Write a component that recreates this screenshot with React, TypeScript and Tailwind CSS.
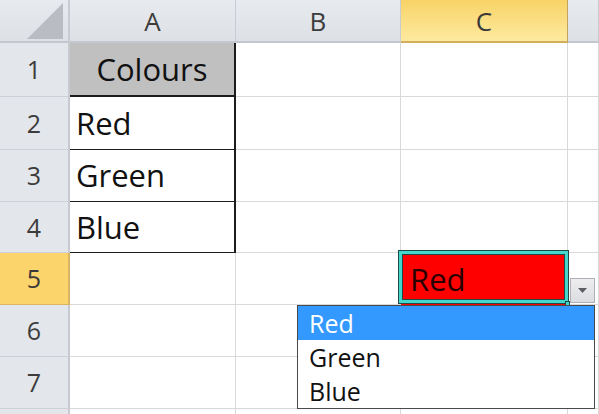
import React from 'react';

type Row = { n: number; h: string; label: boolean };

const rows: Row[] = [
  { n: 1, h: 'h-[54px]', label: true },
  { n: 2, h: 'h-[53px]', label: true },
  { n: 3, h: 'h-[52px]', label: true },
  { n: 4, h: 'h-[51px]', label: true },
  { n: 5, h: 'h-[52px]', label: true },
  { n: 6, h: 'h-[52px]', label: true },
  { n: 7, h: 'h-[52px]', label: true },
  // only a sliver of row 8 is on screen, its number is below the fold
  { n: 8, h: 'h-[52px]', label: false },
];

const colours = ['Red', 'Green', 'Blue'];

const gridCell = 'border-r border-b border-[#d9d9d9] bg-white';

function HeaderCell({ label, active }: { label: string; active?: boolean }) {
  return (
    <div
      className={`flex items-center justify-center text-[26px] leading-none ${
        active
          ? 'bg-gradient-to-b from-[#f8d365] to-[#fdea9f] border-r border-r-[#c2a45e] border-b-2 border-b-[#d2ae5a] text-[#3a3a3a]'
          : 'bg-gradient-to-b from-[#e7eaee] to-[#dde1e6] border-r border-r-[#c8ccd2] border-b-2 border-b-[#c4c8ce] text-[#3c3c3c]'
      }`}
    >
      {label}
    </div>
  );
}

function RowHeader({ n, label }: { n: number; label: boolean }) {
  const active = n === 5;
  return (
    <div
      className={`flex items-center justify-center text-[25px] leading-none border-r-2 border-b ${
        active
          ? 'bg-[#fbd46c] border-r-[#d9b562] border-b-[#d9b562] text-[#3a3a3a]'
          : 'bg-[#e3e6ea] border-r-[#c6cad0] border-b-[#cdd1d7] text-[#3c3c3c]'
      }`}
    >
      {label ? n : null}
    </div>
  );
}

function CellA({ n }: { n: number }) {
  if (n === 1) {
    return (
      <div className="flex items-center justify-center bg-[#c0c0c0] border-r-2 border-r-[#1c1c1c] border-b-2 border-b-[#1c1c1c] text-[31px] leading-none text-[#111]">
        Colours
      </div>
    );
  }
  if (n >= 2 && n <= 4) {
    return (
      <div className="flex items-center pl-[6px] bg-white border-r-2 border-r-[#1c1c1c] border-b border-b-[#1c1c1c] text-[31px] leading-none text-[#111]">
        {colours[n - 2]}
      </div>
    );
  }
  return <div className={gridCell} />;
}

function CellC({ n }: { n: number }) {
  if (n !== 5) return <div className={gridCell} />;
  return (
    <div className="relative flex items-center pl-[9px] bg-[#ff0000] text-[31px] leading-none text-[#2a0000]">
      Red
      {/* active cell frame */}
      <div className="pointer-events-none absolute left-[-3px] top-[-3px] w-[171px] h-[54px] border border-[#1f4a46]">
        <div className="w-full h-full border-[3px] border-[#45d7cc]">
          <div className="w-full h-full border border-[#1f4a46]" />
        </div>
      </div>
      <div className="absolute left-[164px] top-[48px] w-[5px] h-[5px] bg-[#45d7cc] border border-[#1f4a46]" />

      {/* dropdown button */}
      <div className="absolute left-[169px] top-[25px] w-[25px] h-[25px] flex items-center justify-center bg-gradient-to-b from-[#eeeef0] to-[#dcdde1] border border-[#adb0b6]">
        <svg width="9" height="5" viewBox="0 0 9 5">
          <path d="M0 0 H9 L4.5 5 Z" fill="#5a5d63" />
        </svg>
      </div>

      {/* validation list */}
      <div className="absolute z-10 left-[-104px] top-[52px] w-[298px] h-[104px] bg-white border border-[#4a4a4a] flex flex-col text-[25px] leading-none">
        <div className="h-[34px] flex items-center pl-[11px] bg-[#3399ff] text-white">Red</div>
        <div className="h-[34px] flex items-center pl-[11px] text-[#111]">Green</div>
        <div className="h-[34px] flex items-center pl-[11px] text-[#111]">Blue</div>
      </div>
    </div>
  );
}

export default function App() {
  return (
    <div className="w-[599px] h-[414px] overflow-hidden bg-white font-['Open_Sans',sans-serif]">
      <div className="grid grid-cols-[70px_166px_165px_167px_1fr]">
        {/* column headers */}
        <div className="h-[43px] relative bg-gradient-to-b from-[#e7eaee] to-[#dde1e6] border-r-2 border-r-[#c8ccd2] border-b-2 border-b-[#c4c8ce]">
          <svg className="absolute left-[27px] top-[3px]" width="36" height="36" viewBox="0 0 36 36">
            <path d="M36 0 V36 H0 Z" fill="#b9bdc3" />
          </svg>
        </div>
        <HeaderCell label="A" />
        <HeaderCell label="B" />
        <HeaderCell label="C" active />
        <HeaderCell label="" />

        {rows.map((r) => (
          <React.Fragment key={r.n}>
            <div className={`${r.h} grid`}>
              <RowHeader n={r.n} label={r.label} />
            </div>
            <div className={`${r.h} grid`}>
              <CellA n={r.n} />
            </div>
            <div className={`${r.h} grid`}>
              <div className={gridCell} />
            </div>
            <div className={`${r.h} grid`}>
              <CellC n={r.n} />
            </div>
            <div className={`${r.h} grid`}>
              <div className={gridCell} />
            </div>
          </React.Fragment>
        ))}
      </div>
    </div>
  );
}
